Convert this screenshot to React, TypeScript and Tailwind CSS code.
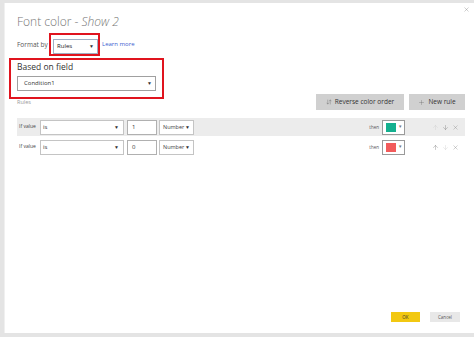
import React from "react";
import { ArrowUp, ArrowDown, X, ArrowDownUp, Plus } from "lucide-react";

const font = { fontFamily: '"Segoe UI", "Open Sans", "Noto Sans", sans-serif' };

function Caret() {
  return <span className="text-[5px] leading-none text-[#333]">▼</span>;
}

function RuleRow({ bg, value, color, upActive }: { bg: string; value: string; color: string; upActive: boolean }) {
  return (
    <div className={`flex items-center h-[18px] whitespace-nowrap ${bg}`}>
      <span className="w-[23px] pl-[2px] text-[5px] text-[#444]">If value</span>
      <div className="flex items-center justify-between w-[84px] h-[15px] bg-white border border-[#c4c4c4] px-[2px] pr-[4px]">
        <span className="text-[6px] text-[#333]">is</span>
        <Caret />
      </div>
      <div className="flex items-center w-[30px] h-[15px] ml-[3px] bg-white border border-[#b0b0b0] px-[4px]">
        <span className="text-[6px] text-[#333]">{value}</span>
      </div>
      <div className="flex items-center justify-between w-[35px] h-[15px] ml-[2px] bg-white border border-[#c4c4c4] px-[3px]">
        <span className="text-[5.5px] text-[#444]">Number</span>
        <Caret />
      </div>
      <div className="flex-1" />
      <span className="text-[4.5px] text-[#555] mr-[3px]">then</span>
      <div className="flex items-center w-[23px] h-[15px] bg-white border border-[#9a9a9a] pl-[3px]">
        <div className="w-[10px] h-[9px]" style={{ background: color }} />
        <span className="ml-[3px] text-[5px] text-[#777]">▾</span>
      </div>
      <div className="w-[27px]" />
      <ArrowUp size={7} strokeWidth={1.3} color={upActive ? "#777" : "#ccc"} />
      <div className="w-[3px]" />
      <ArrowDown size={7} strokeWidth={1.3} color={upActive ? "#ccc" : "#777"} />
      <div className="w-[3px]" />
      <X size={7} strokeWidth={1.3} color="#888" />
      <div className="w-[6px]" />
    </div>
  );
}

export default function App() {
  return (
    <div className="w-[474px] h-[337px] bg-[#e4e4e4] pt-[3px] pl-[4px] pb-[4px] flex whitespace-nowrap" style={font}>
      <div className="flex-1 bg-white flex flex-col border-l border-[#f0f0f0]">
        {/* title */}
        <div className="flex items-start h-[30px]">
          <div className="pl-[12px] pt-[12px] text-[12px] leading-[14px] font-light text-[#777]">
            Font color - <span className="italic">Show 2</span>
          </div>
          <div className="flex-1" />
          <div className="pt-[3px] pr-[4px]">
            <X size={7} strokeWidth={1.2} color="#777" />
          </div>
        </div>
        {/* format by */}
        <div className="flex items-center h-[23px]">
          <span className="pl-[12px] text-[6.5px] text-[#555] w-[44px]">Format by</span>
          <div className="h-[23px] border-2 border-[#e0141e] pt-[4px] pl-[2px] w-[51px]">
            <div className="flex items-center justify-between h-[15px] w-[45px] border border-[#9fb0c4] bg-white px-[3px]">
              <span className="text-[6px] text-[#222]">Rules</span>
              <Caret />
            </div>
          </div>
          <span className="ml-[2px] text-[6px] text-[#3c5ed0]">Learn more</span>
        </div>
        {/* based on field */}
        <div className="relative z-10 mt-[2px] ml-[4px] w-[155px] h-[41px] border-2 border-[#e0141e] pl-[6px] pr-[6px]">
          <div className="h-[14px] text-[8.5px] leading-[14px] text-[#333]">Based on field</div>
          <div className="mt-[2px] flex items-center justify-between h-[15px] border border-[#a0a0a0] bg-white pl-[6px] pr-[3px]">
            <span className="text-[6px] text-[#333]">Condition1</span>
            <Caret />
          </div>
        </div>
        {/* rules label + buttons */}
        <div className="flex items-start mt-[-5px] h-[16px] pl-[12px] pr-[9px]">
          <span className="pt-[4px] text-[5.5px] leading-[8px] text-[#999]">Rules</span>
          <div className="flex-1" />
          <div className="flex items-center justify-center gap-[3px] w-[88px] h-[16px] bg-[#d0d0d0]">
            <ArrowDownUp size={6} strokeWidth={1.2} color="#444" />
            <span className="text-[6.5px] text-[#333]">Reverse color order</span>
          </div>
          <div className="flex items-center justify-center gap-[3px] w-[56px] h-[16px] ml-[5px] bg-[#d0d0d0]">
            <Plus size={7} strokeWidth={1} color="#555" />
            <span className="text-[6.5px] text-[#333]">New rule</span>
          </div>
        </div>
        {/* rows */}
        <div className="mt-[8px] ml-[12px] mr-[9px] flex flex-col gap-[2px]">
          <RuleRow bg="bg-[#ececec]" value="1" color="#14b08f" upActive={false} />
          <RuleRow bg="bg-white" value="0" color="#f25b5b" upActive={true} />
        </div>
        <div className="flex-1" />
        {/* footer */}
        <div className="flex items-center justify-end h-[10px] mb-[11px] pr-[14px]">
          <div className="flex items-center justify-center w-[29px] h-[10px] bg-[#f2c811]">
            <span className="text-[4.5px] text-[#333]">OK</span>
          </div>
          <div className="flex items-center justify-center w-[30px] h-[10px] ml-[10px] bg-[#e8e8e8]">
            <span className="text-[4.5px] text-[#555]">Cancel</span>
          </div>
        </div>
      </div>
    </div>
  );
}
